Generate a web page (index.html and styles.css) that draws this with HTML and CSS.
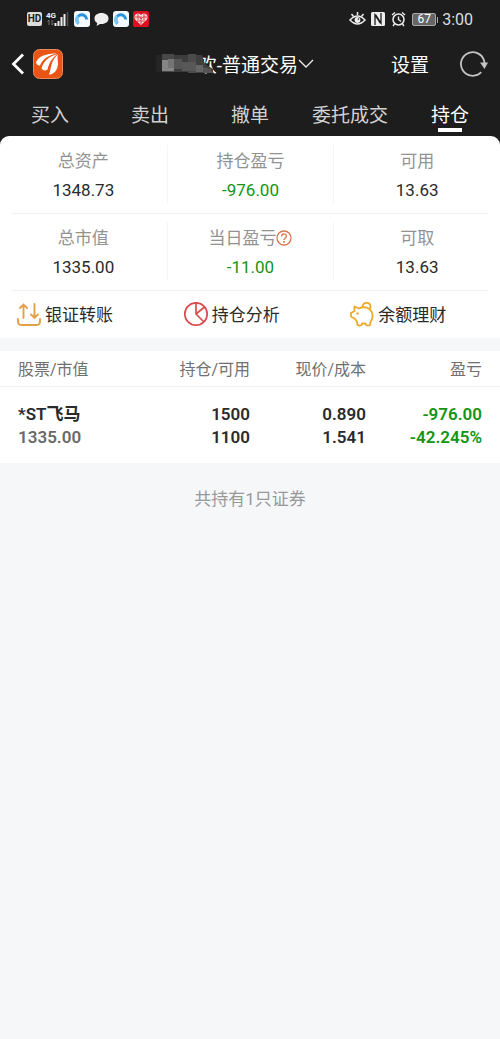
FILE: index.html
```html
<!DOCTYPE html>
<html lang="zh-CN">
<head>
<meta charset="utf-8">
<meta name="viewport" content="width=device-width, initial-scale=1">
<title>持仓</title>
<link rel="stylesheet" href="styles.css">
</head>
<body>
<header class="top">
  <div class="status">
    <div class="status-group">
      <span class="hd">HD</span>
      <svg width="24" height="18" viewBox="0 0 24 18" aria-hidden="true">
        <text x="0" y="8" class="net">4G</text>
        <path d="M3 15v-5M1.500 11.500L3 10M6 10v5M7.500 13.500L6 15" stroke="#777" fill="none"/>
        <path d="M9.500 13v3M12.500 11v5M15.500 7v9M18.500 4v12" stroke="#eee" stroke-width="2"/>
        <path d="M21.500 2v14" stroke="#555" stroke-width="1.500"/>
      </svg>
      <svg width="16" height="16" viewBox="0 0 16 16" aria-hidden="true">
        <rect width="16" height="16" rx="3" fill="#f3f8fc"/>
        <path d="M4.500 12.500A5 5 0 1 1 12.800 8.500" stroke="#2792df" stroke-width="3" fill="none"/>
        <path d="M4.500 12.500A5 5 0 0 1 4 5" stroke="#7cc6f0" stroke-width="3" fill="none"/>
      </svg>
      <svg width="15" height="15" viewBox="0 0 15 15" aria-hidden="true">
        <path d="M7.500 1C3.400 1 .500 3.300.500 6.500c0 2 1 3.500 2.800 4.500L2.500 14l3.500-2.100 1.500.1c4.100 0 7-2.300 7-5.500S11.600 1 7.500 1z" fill="#eee"/>
      </svg>
      <svg width="16" height="16" viewBox="0 0 16 16" aria-hidden="true">
        <rect width="16" height="16" rx="3" fill="#f3f8fc"/>
        <path d="M4.500 12.500A5 5 0 1 1 12.800 8.500" stroke="#2792df" stroke-width="3" fill="none"/>
        <path d="M4.500 12.500A5 5 0 0 1 4 5" stroke="#7cc6f0" stroke-width="3" fill="none"/>
      </svg>
      <svg width="16" height="16" viewBox="0 0 16 16" aria-hidden="true">
        <rect width="16" height="16" rx="2" fill="#dc1020"/>
        <path d="M8 14L2.500 9C.500 6.500 1.500 2.500 5 2.500c1.500 0 2.500.8 3 1.700.500-.900 1.500-1.700 3-1.700 3.500 0 4.500 4 2.500 6.500z" fill="#f7dada"/>
        <path d="M2 6h5l1 2 2-2h4M5 3v6M11 3v6M4 10h8M8 5v8" stroke="#dc3040" stroke-width=".9" fill="none"/>
      </svg>
    </div>
    <div class="status-group">
      <svg width="17" height="16" viewBox="0 0 17 16" aria-hidden="true">
        <path d="M1 9q7.500-8 15 0-7.500 8-15 0z" stroke="#eee" stroke-width="1.600" fill="none"/>
        <circle cx="8.500" cy="9" r="2.900" fill="#eee"/><circle cx="9.500" cy="8" r=".8" fill="#1d1d1d"/>
        <path d="M8.500 1v3M2.500 3l2 2.500M14.500 3l-2 2.500" stroke="#eee" stroke-width="1.500"/>
      </svg>
      <svg class="nfc" width="14" height="14" viewBox="0 0 14 14" aria-hidden="true">
        <rect width="14" height="14" rx="1.500" fill="#eee"/>
        <path d="M4 13V3l5.500 8.500M10 1v10L4.500 2.500" stroke="#1d1d1d" stroke-width="1.300" fill="none"/>
      </svg>
      <svg class="alarm" width="15" height="16" viewBox="0 0 15 16" aria-hidden="true">
        <circle cx="7.500" cy="8.500" r="5.500" stroke="#eee" stroke-width="1.500" fill="none"/>
        <path d="M7.500 5.500v3l2.500 2M1 4l3-2.500M14 4l-3-2.500M3.500 13L2 15M11.500 13l1.500 2" stroke="#eee" stroke-width="1.400" fill="none"/>
      </svg>
      <span class="battery">67</span>
      <time class="clock">3:00</time>
    </div>
  </div>

  <div class="bar">
    <button class="plain" aria-label="返回">
      <svg width="14" height="22" viewBox="0 0 14 22"><path d="M12 1.500L2.500 11l9.500 9.500" stroke="#fff" stroke-width="2.800" fill="none"/></svg>
    </button>
    <svg class="logo" width="30" height="30" viewBox="0 0 30 30" aria-hidden="true">
      <rect x=".5" y=".5" width="29" height="29" rx="6" fill="#ea5516" stroke="#e58a61"/>
      <path d="M3 13.500C5.500 7 13 4.500 24 4.500 15 6.500 9.500 10 7 16.500Q4 17 3 13.500z" fill="#fff"/>
      <path d="M8.500 19.500C10 12.500 16 7.500 24.500 5 19 9 16 14 14.500 20.500Q11 23 8.500 19.500z" fill="#fff"/>
      <path d="M16 25.500C18.500 19 17.500 11.500 25 5.500 23.500 10.500 26.500 14 24 19.500 22.500 23 20 25.500 16 25.500z" fill="#fff"/>
    </svg>
    <button class="plain account">
      <svg class="mosaic" width="60" height="24" viewBox="0 0 60 24" aria-hidden="true">
        <path d="M0 3h6v17H0z" fill="#252525"/><path d="M6 2h12v18H6z" fill="#484848"/>
        <path d="M6 8h12v11H6z" fill="#858585"/><path d="M12 7h6v9h-6z" fill="#747474"/>
        <path d="M18 3h14v17H18z" fill="#3d3d3d"/><path d="M18 7h8v10h-8z" fill="#555"/>
        <path d="M32 2h8v19h-8z" fill="#4b4b4b"/><path d="M26 10h14v9H26z" fill="#585858"/>
        <path d="M40 3h6l3 9 8 5v4H40z" fill="#3f3f3f"/><path d="M40 13h7v7h-7z" fill="#666"/>
        <path d="M47 15l8 2 2 4H47z" fill="#555"/>
      </svg><span>欢-普通交易</span><svg width="16" height="12" viewBox="0 0 16 12" aria-hidden="true"><path d="M1 2l7 7 7-7" stroke="#eee" stroke-width="1.300" fill="none"/></svg>
    </button>
    <button class="plain settings">设置</button>
    <button class="plain refresh" aria-label="刷新">
      <svg width="30" height="28" viewBox="0 0 30 28"><path d="M22.200 22.200A11.800 11.800 0 1 1 25.500 13" stroke="#c4c4c4" stroke-width="1.800" fill="none"/><path d="M21 12.500h8l-3.500 6.500z" fill="#c4c4c4"/></svg>
    </button>
  </div>

  <nav class="tabs">
    <a href="#buy">买入</a>
    <a href="#sell">卖出</a>
    <a href="#cancel">撤单</a>
    <a href="#orders">委托成交</a>
    <a href="#positions" class="active" aria-current="page">持仓</a>
  </nav>
</header>

<main>
  <div class="card-wrap">
    <section class="card">
      <dl class="metrics">
        <div><dt>总资产</dt><dd>1348.73</dd></div>
        <div><dt>持仓盈亏</dt><dd class="down">-976.00</dd></div>
        <div><dt>可用</dt><dd>13.63</dd></div>
      </dl>
      <hr class="rule">
      <dl class="metrics">
        <div><dt>总市值</dt><dd>1335.00</dd></div>
        <div><dt>当日盈亏<button class="plain" aria-label="说明"><svg width="16" height="16" viewBox="0 0 16 16"><circle cx="8" cy="8" r="7" stroke="#d9764e" stroke-width="1.300" fill="none"/><path d="M5.700 6.400C5.700 3.200 10.400 3.200 10.400 6.200 10.400 8 8 8 8 10" stroke="#d9764e" stroke-width="1.300" fill="none"/><circle cx="8" cy="12" r=".9" fill="#d9764e"/></svg></button></dt><dd class="down">-11.00</dd></div>
        <div><dt>可取</dt><dd>13.63</dd></div>
      </dl>
      <hr class="rule">
      <div class="links">
        <a href="#transfer">
          <svg width="26" height="26" viewBox="0 0 26 26" aria-hidden="true"><path d="M2 17v2.500q0 3.500 4 3.500h14q4 0 4-3.500V17M7.500 16V2.500M4 6L7.500 2.500 11 6M18.500 2v14M15 12.500l3.500 3.500 3.500-3.500" stroke="#e3a046" stroke-width="1.900" fill="none" stroke-linecap="round"/></svg>
          银证转账</a>
        <a href="#analysis">
          <svg width="26" height="26" viewBox="0 0 26 26" aria-hidden="true"><g stroke="#dc4c4f" stroke-width="1.700" fill="none"><circle cx="13" cy="12" r="11.200"/><path d="M13 1v11l8 8M13 12l8.500-7"/></g></svg>
          持仓分析</a>
        <a href="#wealth">
          <svg width="26" height="26" viewBox="0 0 26 26" aria-hidden="true"><g stroke="#eda92c" stroke-width="1.800" fill="none" stroke-linejoin="round"><path d="M5.500 4.500l4.500 2Q14 4.500 18 5.700C22 7.500 24 11 23.500 15q-.5 3-2 5l-.5 3q-2 1.200-4 0l-.5-1.500h-3.500l-.5 1.500q-2 1.200-4 0L8 19.500 6 17 2 14.500v-3.500L5.500 9z"/><path d="M13.500 5C14-.300 21-.300 21.500 4.500q0 1.500-1 2.500"/></g><circle cx="8.500" cy="11.500" r="1.200" fill="#eda92c"/></svg>
          余额理财</a>
      </div>
    </section>
  </div>

  <table class="holdings">
    <thead>
      <tr><th>股票/市值</th><th>持仓/可用</th><th>现价/成本</th><th>盈亏</th></tr>
    </thead>
    <tbody>
      <tr>
        <td>*ST飞马<span class="sub">1335.00</span></td>
        <td>1500<span>1100</span></td>
        <td>0.890<span>1.541</span></td>
        <td class="down">-976.00<span>-42.245%</span></td>
      </tr>
    </tbody>
  </table>
  <p class="total">共持有1只证券</p>
</main>
</body>
</html>
```
FILE: styles.css
```css
* { box-sizing: border-box; }

body {
  margin: 0;
  background: #f6f7f9;
  color: #2a2a2a;
  font-family: Roboto, "Noto Sans CJK SC", sans-serif;
  font-size: 17px;
  line-height: 24px;
}

svg { display: block; flex: none; }
a { color: inherit; text-decoration: none; }
dl, dd, p { margin: 0; }

.plain {
  padding: 0;
  border: 0;
  background: none;
  color: inherit;
  font: inherit;
}

.top {
  background: #1d1d1d;
  color: #fff;
  font-size: 19px;
}

.status {
  display: flex;
  justify-content: space-between;
  align-items: center;
  height: 38px;
  padding: 0 27px;
}

.status-group { display: flex; align-items: center; gap: 4px; }

.hd {
  width: 15px;
  border-radius: 2px;
  background: #ddd;
  color: #1d1d1d;
  font-size: 10px;
  font-weight: 700;
  line-height: 14px;
  text-align: center;
}

.net { fill: #eee; font-size: 8px; font-weight: 700; }
.nfc { margin-left: 1px; }
.alarm { margin-left: 2px; }

.battery {
  position: relative;
  width: 24px;
  margin-left: 2px;
  border: 1px solid #aaa;
  border-radius: 2px;
  background: #666;
  color: #fff;
  font-size: 12px;
  line-height: 11px;
  text-align: center;
}

.battery::after {
  content: "";
  position: absolute;
  top: 3px;
  right: -3px;
  width: 1px;
  height: 6px;
  background: #aaa;
}

.clock { margin-left: 2px; padding-top: 2px; color: #ddd; font-size: 16px; }

.bar {
  display: flex;
  align-items: center;
  height: 52px;
  padding: 0 11px;
}

.logo { margin-left: 8px; }

.account {
  display: flex;
  flex: 1;
  justify-content: center;
  align-items: center;
  padding-left: 16px;
}

.account span, .settings { padding-top: 3px; }
.mosaic { position: relative; margin-right: -18px; }
.refresh { margin-left: 30px; }

.tabs {
  display: grid;
  grid-template-columns: repeat(5, 1fr);
  height: 46px;
  color: #d2d2d2;
  text-align: center;
}

.tabs a { padding-top: 14px; }
.tabs .active { color: #fff; }

.active::after {
  content: "";
  display: block;
  width: 24px;
  height: 4px;
  margin: 0 auto;
  background: #fff;
}

.card-wrap { background: #1d1d1d; }

.card {
  padding-top: 1px;
  border-radius: 9px 9px 0 0;
  background: #fff;
}

.metrics {
  display: grid;
  grid-template-columns: repeat(3, 1fr);
  padding: 8px 0 10px;
  text-align: center;
}

.rule {
  height: 1px;
  margin: 0 12px;
  border: 0;
  background: #f2f2f2;
}

.metrics div {
  display: flex;
  flex-direction: column;
  gap: 5px;
  padding: 4px 0 1px;
}

.metrics div + div { border-left: 1px solid #f5f5f5; }

.metrics dt {
  display: flex;
  justify-content: center;
  align-items: center;
  color: #929292;
}

.down { color: #129512; }

.links {
  display: grid;
  grid-template-columns: repeat(3, 1fr);
  height: 47px;
  padding-top: 1px;
}

.links a {
  display: flex;
  align-items: center;
  gap: 3px;
  padding-left: 16px;
}

.holdings {
  width: 100%;
  margin-top: 13px;
  border-collapse: collapse;
  table-layout: fixed;
  background: #fff;
  text-align: right;
}

.holdings th {
  width: 23.2%;
  height: 35px;
  padding: 3px 0 0;
  border-bottom: 1px solid #f2f2f2;
  color: #707070;
  font-size: 16px;
  font-weight: 400;
}

.holdings td {
  padding: 16px 0 14px;
  font-weight: 600;
  line-height: 23px;
}

.holdings th:first-child,
.holdings td:first-child {
  width: 26.8%;
  padding-left: 18px;
  text-align: left;
}

.holdings th:last-child,
.holdings td:last-child {
  width: 26.8%;
  padding-right: 18px;
}

.holdings span { display: block; }
.holdings .sub { color: #6a6a6a; }

.total {
  padding-top: 24px;
  color: #999;
  text-align: center;
}
```
